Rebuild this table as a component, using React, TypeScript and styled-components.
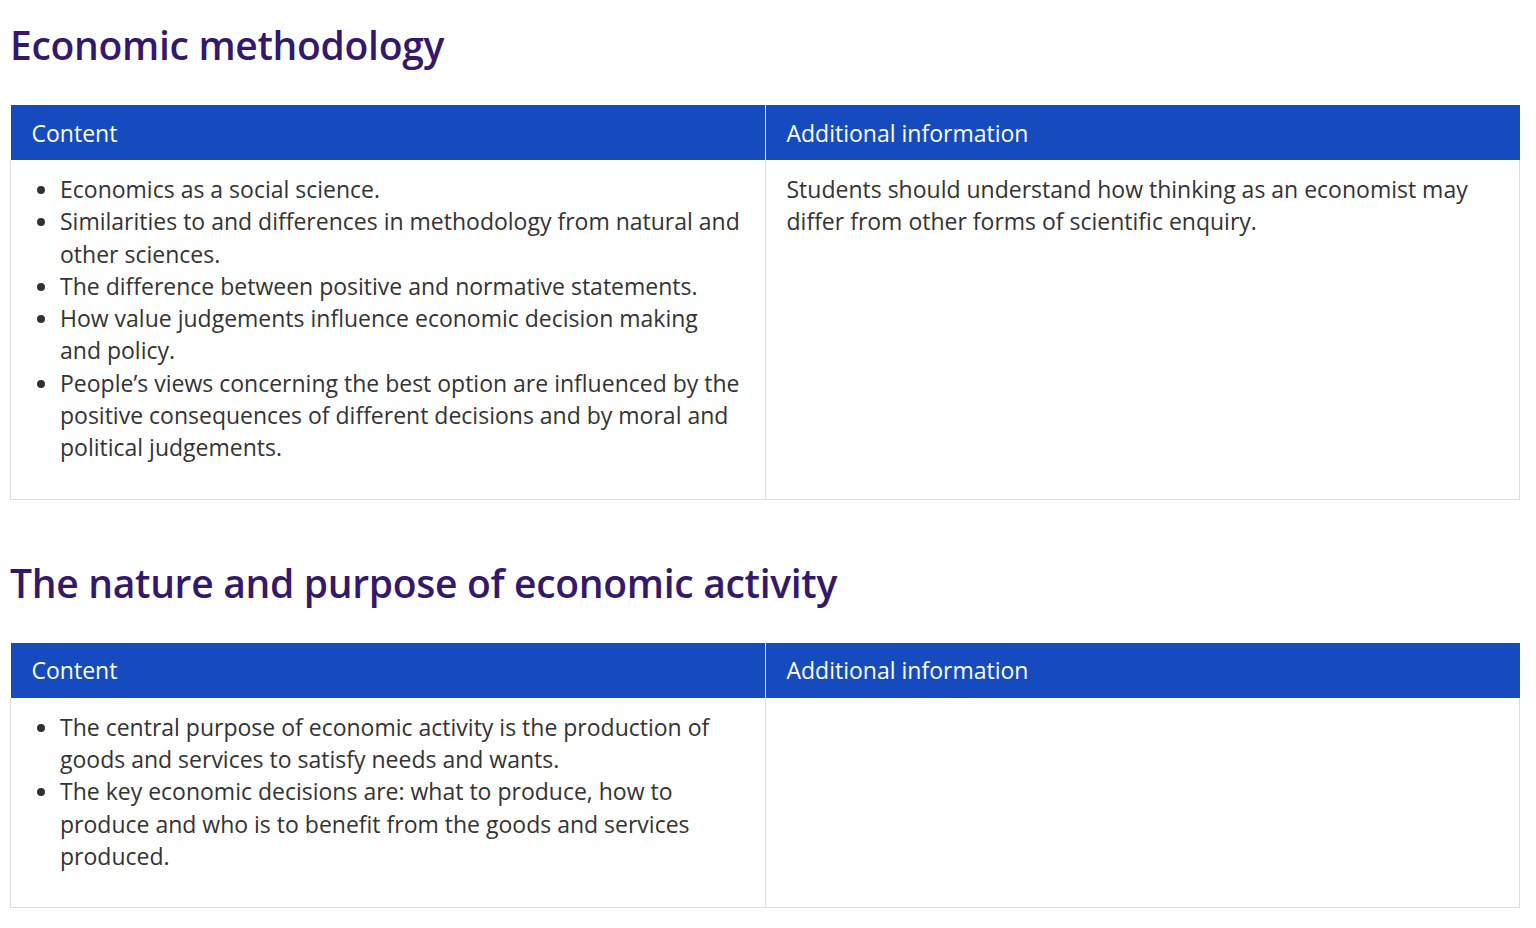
import React from "react";
import styled, { createGlobalStyle } from "styled-components";

const GlobalStyle = createGlobalStyle`
  body {
    margin: 0;
    background: #ffffff;
    font-family: "Open Sans", "Noto Sans", sans-serif;
    color: #333333;
  }
`;

const Page = styled.main`
  padding: 15px 16px 20px 10px;
  display: flex;
  flex-direction: column;
`;

const Section = styled.section`
  display: flex;
  flex-direction: column;
  & + & {
    margin-top: 53px;
  }
`;

const Heading = styled.h2`
  margin: 0 0 30px 0;
  font-size: 39px;
  line-height: 60px;
  font-weight: 600;
  color: #33186b;
  letter-spacing: -0.3px;
`;

const Table = styled.table`
  width: 100%;
  border-collapse: collapse;
  table-layout: fixed;
`;

const HeadCell = styled.th`
  background: #164bc0;
  color: #ffffff;
  font-weight: 400;
  font-size: 23px;
  text-align: left;
  height: 55px;
  padding: 0 21px;
  border-left: 1px solid #dfe6f5;
  &:first-child {
    border-left: none;
  }
`;

const Cell = styled.td`
  vertical-align: top;
  padding: 13px 21px 35px 21px;
  border: 1px solid #dddddd;
  border-top: none;
  font-size: 23px;
  line-height: 32.3px;
  color: #333333;
`;

const List = styled.ul`
  margin: 0;
  padding-left: 28px;
  list-style: disc;
`;

const Item = styled.li`
  padding-left: 0;
`;

const Para = styled.p`
  margin: 0;
`;

type Block = {
  title: string;
  items: string[];
  info: string;
};

const blocks: Block[] = [
  {
    title: "Economic methodology",
    items: [
      "Economics as a social science.",
      "Similarities to and differences in methodology from natural and other sciences.",
      "The difference between positive and normative statements.",
      "How value judgements influence economic decision making and policy.",
      "People\u2019s views concerning the best option are influenced by the positive consequences of different decisions and by moral and political judgements.",
    ],
    info: "Students should understand how thinking as an economist may differ from other forms of scientific enquiry.",
  },
  {
    title: "The nature and purpose of economic activity",
    items: [
      "The central purpose of economic activity is the production of goods and services to satisfy needs and wants.",
      "The key economic decisions are: what to produce, how to produce and who is to benefit from the goods and services produced.",
    ],
    info: "",
  },
];

export default function App() {
  return (
    <>
      <GlobalStyle />
      <Page>
        {blocks.map((b) => (
          <Section key={b.title}>
            <Heading>{b.title}</Heading>
            <Table>
              <thead>
                <tr>
                  <HeadCell>Content</HeadCell>
                  <HeadCell>Additional information</HeadCell>
                </tr>
              </thead>
              <tbody>
                <tr>
                  <Cell>
                    <List>
                      {b.items.map((it) => (
                        <Item key={it}>{it}</Item>
                      ))}
                    </List>
                  </Cell>
                  <Cell>{b.info && <Para>{b.info}</Para>}</Cell>
                </tr>
              </tbody>
            </Table>
          </Section>
        ))}
      </Page>
    </>
  );
}
